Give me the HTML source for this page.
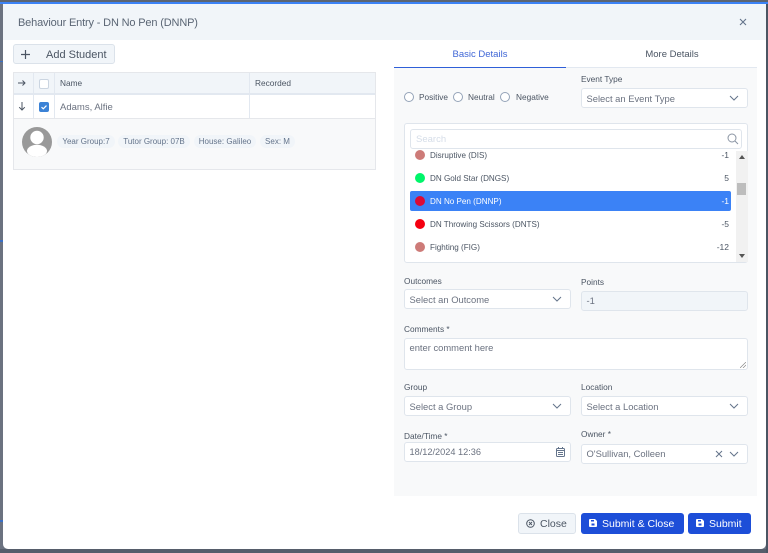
<!DOCTYPE html>
<html><head><meta charset="utf-8">
<style>
html,body{margin:0;padding:0;width:768px;height:553px;overflow:hidden;background:#6b7280;font-family:"Liberation Sans",sans-serif;color:#4b5563}
#w{position:absolute;left:0;top:0;width:768px;height:553px;filter:blur(.25px)}
.a{position:absolute;box-sizing:border-box}
.t{position:absolute;white-space:nowrap;line-height:14px;height:14px}
.lb{font-size:8.3px;color:#4b5563}
.sel{position:absolute;box-sizing:border-box;background:#fff;border:1px solid #dfe5ec;border-radius:3px;height:20px;font-size:9.4px;line-height:20px;padding-left:4.5px;color:#6b7280;white-space:nowrap}
.chev{position:absolute;right:8px;top:6px}
.chip{position:absolute;box-sizing:border-box;top:135px;height:13px;border-radius:7px;background:#f1f5f9;font-size:8px;line-height:13px;text-align:center;color:#64748b;white-space:nowrap}
.dot{position:absolute;left:415px;width:10px;height:10px;border-radius:50%}
.nm{position:absolute;left:430px;font-size:8.1px;line-height:14px;color:#4b5563;white-space:nowrap}
.pt{position:absolute;right:39px;font-size:8.5px;line-height:14px;color:#4b5563}
.rad{position:absolute;box-sizing:border-box;top:92px;width:10px;height:10px;border-radius:50%;border:1px solid #94a3b8;background:#fff}
.btn{position:absolute;box-sizing:border-box;top:513px;height:21px;border-radius:3px;background:#1d4ed8;color:#fff;font-size:10.5px;line-height:23px;white-space:nowrap}
</style></head>
<body><div id="w">
<div class="a" style="left:0;top:0;width:768px;height:2px;background:#5b6472"></div>
<div class="a" style="left:0;top:2px;width:768px;height:2px;background:#3b82f6"></div>
<div class="a" style="left:0;top:61px;width:3px;height:1px;background:#3b6fc4"></div>
<div class="a" style="left:0;top:240px;width:3px;height:2px;background:#3b6fc4"></div>
<div class="a" style="left:0;top:520px;width:3px;height:2px;background:#3b6fc4"></div>
<div class="a" style="left:0;top:549px;width:768px;height:4px;background:#565d6b"></div>
<div class="a" style="left:766px;top:4px;width:2px;height:549px;background:#4b5563"></div>

<div class="a" style="left:3px;top:4px;width:763px;height:545px;background:#fff;border-radius:0 0 5px 5px"></div>
<div class="a" style="left:3px;top:4px;width:763px;height:36px;background:#f1f5f9"></div>
<div class="t" style="left:18px;top:16px;font-size:11px;letter-spacing:-.16px;color:#5b6675">Behaviour Entry - DN No Pen (DNNP)</div>
<svg class="a" style="left:739px;top:18px" width="8" height="8" viewBox="0 0 8 8"><path d="M1 1L7 7M7 1L1 7" stroke="#64748b" stroke-width="1.1"/></svg>

<!-- left -->
<div class="a" style="left:13px;top:44px;width:102px;height:20px;background:#f1f5f9;border:1px solid #dbe2ea;border-radius:3px"></div>
<svg class="a" style="left:21px;top:50px" width="9" height="9" viewBox="0 0 9 9"><path d="M4.5 0V9M0 4.5H9" stroke="#4b5563" stroke-width="1.2"/></svg>
<div class="t" style="left:46px;top:48px;font-size:11px;color:#4b5563">Add Student</div>

<div class="a" style="left:13px;top:72px;width:363px;height:98px;border:1px solid #e5e7eb;background:#fff"></div>
<div class="a" style="left:14px;top:73px;width:361px;height:22px;background:#f1f5f9;border-bottom:2px solid #e2e8f0"></div>
<div class="a" style="left:14px;top:119px;width:361px;height:50px;background:#f8f9fa"></div>
<div class="a" style="left:14px;top:118px;width:361px;height:1px;background:#e5e7eb"></div>
<div class="a" style="left:33px;top:73px;width:1px;height:45px;background:#e2e8f0"></div>
<div class="a" style="left:54px;top:73px;width:1px;height:45px;background:#e2e8f0"></div>
<div class="a" style="left:249px;top:73px;width:1px;height:45px;background:#e2e8f0"></div>
<svg class="a" style="left:18px;top:79px" width="8" height="8" viewBox="0 0 8 8"><path d="M0 4H7M4.5 1.5L7 4L4.5 6.5" stroke="#4b5563" stroke-width="1" fill="none"/></svg>
<svg class="a" style="left:18px;top:102px" width="8" height="9" viewBox="0 0 8 9"><path d="M4 0V8M1.2 5.2L4 8L6.8 5.2" stroke="#4b5563" stroke-width="1" fill="none"/></svg>
<div class="a" style="left:39px;top:79px;width:10px;height:10px;background:#fff;border:1px solid #cbd5e1;border-radius:2px"></div>
<div class="a" style="left:39px;top:102px;width:10px;height:10px;background:#3b82d6;border-radius:2px"></div>
<svg class="a" style="left:39px;top:102px" width="10" height="10" viewBox="0 0 10 10"><path d="M2.5 5.2L4.3 6.8L7.5 3.6" stroke="#fff" stroke-width="1.2" fill="none"/></svg>
<div class="t" style="left:60px;top:76px;font-size:8.3px;color:#4b5563">Name</div>
<div class="t" style="left:255px;top:76px;font-size:8.3px;color:#4b5563">Recorded</div>
<div class="t" style="left:60px;top:101px;font-size:9.5px;color:#6b7280">Adams, Alfie</div>
<svg class="a" style="left:22px;top:127px" width="30" height="30" viewBox="0 0 30 30"><defs><clipPath id="c"><circle cx="15" cy="15" r="15"/></clipPath></defs><circle cx="15" cy="15" r="15" fill="#999"/><g clip-path="url(#c)"><circle cx="15" cy="10.5" r="6.7" fill="#fff"/><ellipse cx="15" cy="24" rx="10" ry="6.2" fill="#fff"/></g></svg>
<div class="chip" style="left:57px;width:58px">Year Group:7</div>
<div class="chip" style="left:118px;width:72px">Tutor Group: 07B</div>
<div class="chip" style="left:194px;width:62px">House: Galileo</div>
<div class="chip" style="left:260px;width:35px">Sex: M</div>

<!-- tabs -->
<div class="t" style="left:394px;width:172px;text-align:center;top:48px;font-size:9.5px;color:#3f66d6">Basic Details</div>
<div class="t" style="left:586px;width:172px;text-align:center;top:48px;font-size:9.5px;color:#4b5563">More Details</div>
<div class="a" style="left:394px;top:67px;width:172px;height:1px;background:#2f5fd8"></div>
<div class="a" style="left:566px;top:67px;width:191px;height:1px;background:#e2e8f0"></div>
<div class="a" style="left:394px;top:68px;width:363px;height:428px;background:#f8f9fa"></div>

<div class="rad" style="left:404px"></div>
<div class="rad" style="left:453px"></div>
<div class="rad" style="left:500px"></div>
<div class="t lb" style="left:419px;top:90px">Positive</div>
<div class="t lb" style="left:468px;top:90px">Neutral</div>
<div class="t lb" style="left:516px;top:90px">Negative</div>
<div class="t lb" style="left:581px;top:72px">Event Type</div>
<div class="sel" style="left:581px;top:88px;width:167px">Select an Event Type<svg class="chev" width="10" height="6" viewBox="0 0 10 6"><path d="M1 1L5 5L9 1" stroke="#64748b" fill="none"/></svg></div>

<!-- list -->
<div class="a" style="left:404px;top:123px;width:344px;height:140px;background:#fff;border:1px solid #dfe5ec;border-radius:3px"></div>
<div class="a" style="left:410px;top:129px;width:332px;height:20px;background:#fff;border:1px solid #dfe5ec;border-radius:3px"></div>
<div class="t" style="left:416px;top:133px;font-size:9.5px;color:#d5dde8">Search</div>
<svg class="a" style="left:727px;top:133px" width="12" height="12" viewBox="0 0 12 12"><circle cx="5" cy="5" r="4" stroke="#8a94a3" fill="none"/><path d="M8 8L11 11" stroke="#8a94a3"/></svg>
<div class="a" style="left:736px;top:151px;width:12px;height:111px;background:#f1f1f1"></div>
<div class="a" style="left:737px;top:183px;width:9px;height:12px;background:#bdbdbd"></div>
<svg class="a" style="left:739px;top:155px" width="6" height="4" viewBox="0 0 6 4"><path d="M3 0L6 4H0Z" fill="#555"/></svg>
<svg class="a" style="left:739px;top:254px" width="6" height="4" viewBox="0 0 6 4"><path d="M3 4L6 0H0Z" fill="#555"/></svg>
<div class="a" style="left:410px;top:191px;width:321px;height:20px;background:#3b82f6;border-radius:2px"></div>
<div class="dot" style="top:150px;background:#cd7b78"></div>
<div class="dot" style="top:173px;background:#00f56a"></div>
<div class="dot" style="top:196px;background:#dc0a35"></div>
<div class="dot" style="top:219px;background:#f50010"></div>
<div class="dot" style="top:242px;background:#cd7b78"></div>
<div class="nm" style="top:149px">Disruptive (DIS)</div><div class="pt" style="top:148px">-1</div>
<div class="nm" style="top:172px">DN Gold Star (DNGS)</div><div class="pt" style="top:171px">5</div>
<div class="nm" style="top:195px;color:#fff">DN No Pen (DNNP)</div><div class="pt" style="top:194px;color:#fff">-1</div>
<div class="nm" style="top:218px">DN Throwing Scissors (DNTS)</div><div class="pt" style="top:217px">-5</div>
<div class="nm" style="top:241px">Fighting (FIG)</div><div class="pt" style="top:240px">-12</div>

<!-- fields -->
<div class="t lb" style="left:404px;top:274px">Outcomes</div>
<div class="sel" style="left:404px;top:289px;width:167px">Select an Outcome<svg class="chev" width="10" height="6" viewBox="0 0 10 6"><path d="M1 1L5 5L9 1" stroke="#64748b" fill="none"/></svg></div>
<div class="t lb" style="left:581px;top:275px">Points</div>
<div class="sel" style="left:581px;top:291px;width:167px;background:#f1f5f9;line-height:18px">-1</div>
<div class="t lb" style="left:404px;top:322px">Comments *</div>
<div class="sel" style="left:404px;top:338px;width:344px;height:32px;line-height:18px">enter comment here<svg class="a" style="right:1px;bottom:1px" width="6" height="6" viewBox="0 0 6 6"><path d="M6 0L0 6M6 3L3 6" stroke="#888" stroke-width=".7"/></svg></div>
<div class="t lb" style="left:404px;top:380px">Group</div>
<div class="sel" style="left:404px;top:396px;width:167px">Select a Group<svg class="chev" width="10" height="6" viewBox="0 0 10 6"><path d="M1 1L5 5L9 1" stroke="#64748b" fill="none"/></svg></div>
<div class="t lb" style="left:581px;top:380px">Location</div>
<div class="sel" style="left:581px;top:396px;width:167px">Select a Location<svg class="chev" width="10" height="6" viewBox="0 0 10 6"><path d="M1 1L5 5L9 1" stroke="#64748b" fill="none"/></svg></div>
<div class="t lb" style="left:404px;top:429px">Date/Time *</div>
<div class="sel" style="left:404px;top:442px;width:167px;font-size:9.2px;line-height:19px">18/12/2024 12:36<svg class="a" style="right:5px;top:4px" width="9" height="10" viewBox="0 0 9 10"><rect x=".5" y="1.5" width="8" height="8" rx="1" fill="none" stroke="#64748b"/><path d="M.5 3.5H8.5M2.5 0V2M6.5 0V2M2 5.5H7M2 7.5H7" stroke="#64748b"/></svg></div>
<div class="t lb" style="left:581px;top:427px">Owner *</div>
<div class="sel" style="left:581px;top:444px;width:167px;line-height:18px">O'Sullivan, Colleen<svg class="a" style="left:133px;top:5px" width="8" height="8" viewBox="0 0 8 8"><path d="M1 1L7 7M7 1L1 7" stroke="#64748b"/></svg><svg class="chev" width="10" height="6" viewBox="0 0 10 6"><path d="M1 1L5 5L9 1" stroke="#64748b" fill="none"/></svg></div>

<!-- buttons -->
<div class="btn" style="left:518px;width:58px;background:#f1f5f9;border:1px solid #dbe2ea;color:#4b5563;line-height:21px;padding-left:21px">Close</div>
<svg class="a" style="left:526px;top:519px" width="9" height="9" viewBox="0 0 9 9"><circle cx="4.5" cy="4.5" r="3.8" fill="none" stroke="#4b5563"/><path d="M3 3L6 6M6 3L3 6" stroke="#4b5563" stroke-width=".9"/></svg>
<div class="btn" style="left:581px;width:103px;padding-left:21px">Submit &amp; Close</div>
<div class="btn" style="left:688px;width:63px;padding-left:21px">Submit</div>
<svg class="a" style="left:589px;top:519px" width="8" height="8" viewBox="0 0 8 8"><path d="M0 1Q0 0 1 0H6L8 2V7Q8 8 7 8H1Q0 8 0 7Z" fill="#fff"/><rect x="2" y="1" width="3" height="1.5" fill="#1d4ed8"/><rect x="2.5" y="4.5" width="3" height="2" fill="#1d4ed8"/></svg>
<svg class="a" style="left:696px;top:519px" width="8" height="8" viewBox="0 0 8 8"><path d="M0 1Q0 0 1 0H6L8 2V7Q8 8 7 8H1Q0 8 0 7Z" fill="#fff"/><rect x="2" y="1" width="3" height="1.5" fill="#1d4ed8"/><rect x="2.5" y="4.5" width="3" height="2" fill="#1d4ed8"/></svg>
</div></body></html>
